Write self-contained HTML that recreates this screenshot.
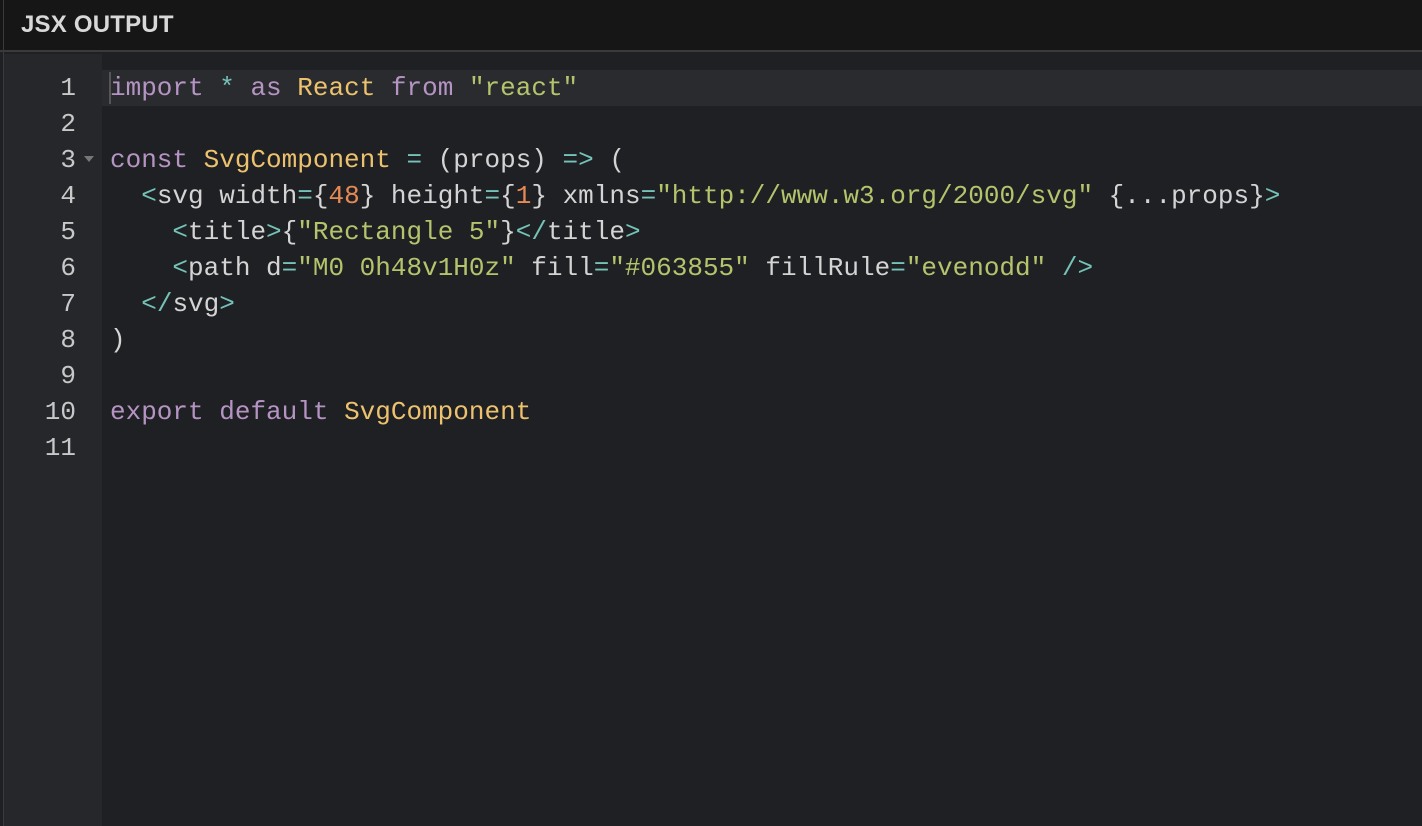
<!DOCTYPE html>
<html><head><style>
body{margin:0;width:1422px;height:826px;background:#1f2023;overflow:hidden;font-family:"Liberation Sans",sans-serif;position:relative}
.hdr{position:absolute;left:0;top:0;width:1422px;height:52px;background:#161616;border-bottom:2px solid #3a3a3c;box-sizing:border-box}
.hdr span{position:absolute;left:21px;top:11px;font-weight:bold;font-size:24px;color:#d8d8d8;letter-spacing:0.2px}
.lb{position:absolute;left:3px;top:0;width:1px;height:826px;background:#3a3a3c}
.gut{position:absolute;left:4px;top:54px;width:98px;height:772px;background:#25272b}
.act{position:absolute;left:102px;top:70px;width:1320px;height:36px;background:#2a2b2f}
.cur{position:absolute;left:109px;top:72px;width:2px;height:32px;background:#555}
.ln{position:absolute;left:4px;width:72px;text-align:right;font-family:"Liberation Mono",monospace;font-size:26px;color:#c8c8c8;line-height:36px}
.code{position:absolute;left:110px;top:70px;font-family:"Liberation Mono",monospace;font-size:26px;line-height:36px;color:#d4d4d4;white-space:pre}
.k{color:#b594c3}.y{color:#ecc26e}.s{color:#b3c46c}.t{color:#74c2b8}.n{color:#e68a55}
.fold{position:absolute;left:84px;top:156px;width:0;height:0;border-left:5px solid transparent;border-right:5px solid transparent;border-top:6px solid #777}
</style></head><body>
<div class="hdr"><span>JSX OUTPUT</span></div>
<div class="lb"></div>
<div class="gut"></div>
<div class="act"></div>
<div class="cur"></div>
<div class="ln" style="top:70px">1<br>2<br>3<br>4<br>5<br>6<br>7<br>8<br>9<br>10<br>11</div>
<div class="fold"></div>
<div class="code"><span class="k">import</span> <span class="t">*</span> <span class="k">as</span> <span class="y">React</span> <span class="k">from</span> <span class="s">"react"</span>

<span class="k">const</span> <span class="y">SvgComponent</span> <span class="t">=</span> (props) <span class="t">=&gt;</span> (
  <span class="t">&lt;</span>svg width<span class="t">=</span>{<span class="n">48</span>} height<span class="t">=</span>{<span class="n">1</span>} xmlns<span class="t">=</span><span class="s">"http://www.w3.org/2000/svg"</span> {...props}<span class="t">&gt;</span>
    <span class="t">&lt;</span>title<span class="t">&gt;</span>{<span class="s">"Rectangle 5"</span>}<span class="t">&lt;/</span>title<span class="t">&gt;</span>
    <span class="t">&lt;</span>path d<span class="t">=</span><span class="s">"M0 0h48v1H0z"</span> fill<span class="t">=</span><span class="s">"#063855"</span> fillRule<span class="t">=</span><span class="s">"evenodd"</span> <span class="t">/&gt;</span>
  <span class="t">&lt;/</span>svg<span class="t">&gt;</span>
)

<span class="k">export</span> <span class="k">default</span> <span class="y">SvgComponent</span>
</div>
</body></html>
